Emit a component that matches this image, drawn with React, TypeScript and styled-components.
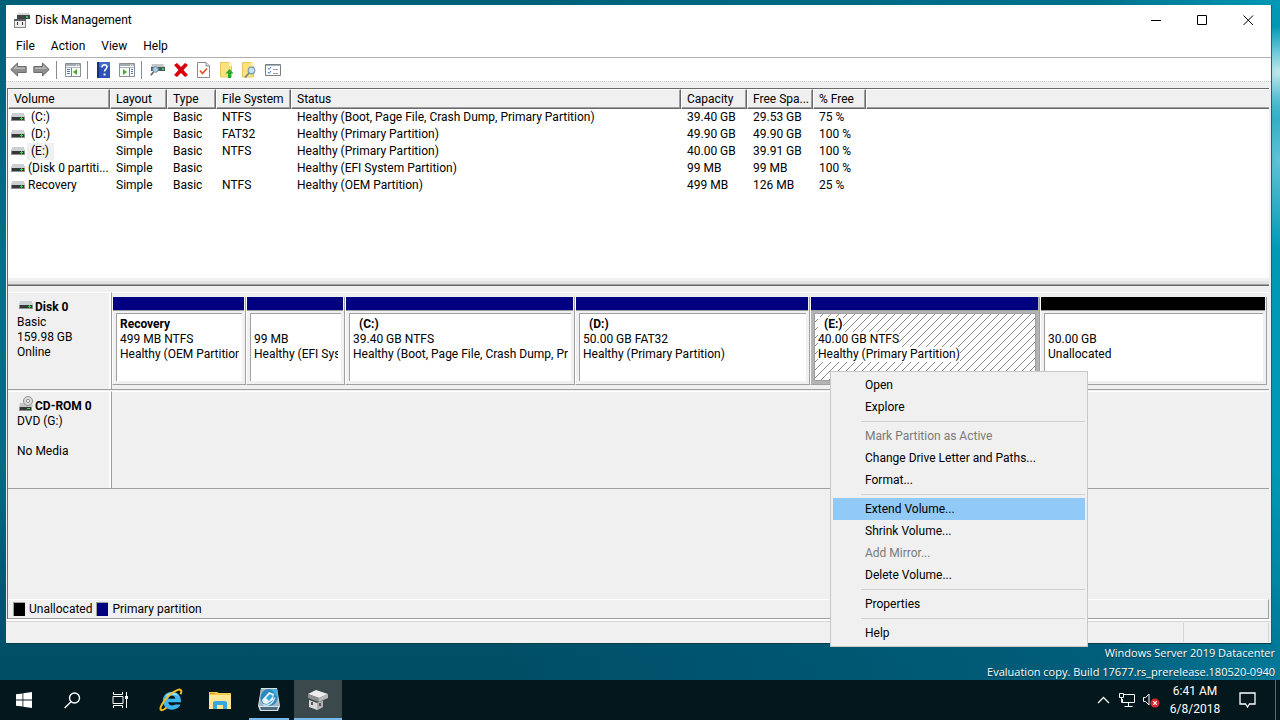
import React from "react";
import styled, { createGlobalStyle, css } from "styled-components";

const face = "#f0f0f0";
const shade = "#a0a0a0";
const dark = "#696969";

const GlobalStyle = createGlobalStyle`
  * { box-sizing: border-box; }
  body {
    margin: 0;
    font: 12px/18px "Segoe UI", Roboto, "Liberation Sans", sans-serif;
    color: #000;
  }
  button { font: inherit; color: inherit; border: 0; padding: 0; background: none; }
  svg { display: block; flex: none; }
`;

const Desktop = styled.div`
  position: relative;
  display: flex;
  flex-direction: column;
  min-height: 100vh;
  background:
    radial-gradient(ellipse 60px 46px at 100% 72px, #c4e8ec 0, rgba(120, 205, 220, 0.8) 50%, transparent 100%),
    radial-gradient(ellipse 60px 90px at 100% 160px, rgba(120, 205, 220, 0.8) 0, transparent 100%),
    linear-gradient(to bottom, transparent 65%, rgba(0, 64, 96, 0.35) 90%),
    linear-gradient(to left, rgba(0, 156, 184, 0.95) 0, rgba(0, 120, 150, 0.7) 14%, transparent 60%),
    linear-gradient(to bottom, #006078 0, #007088 38%, #006a80 70%, #00566a 92%);
`;

const AppWindow = styled.main`
  flex: 1;
  display: flex;
  flex-direction: column;
  margin: 5px 8px 0 6px;
  background: ${face};
  border-right: 1px solid #1b5f70;
  border-bottom: 1px solid #0c3a46;
`;

const TitleBar = styled.header`
  display: flex;
  align-items: center;
  height: 30px;
  padding-left: 8px;
  background: #fff;
`;

const Title = styled.h1`
  flex: 1;
  margin: 0 0 0 5px;
  font-size: 12px;
  font-weight: 400;
`;

const CaptionButton = styled.button`
  display: flex;
  align-items: center;
  justify-content: center;
  width: 46px;
  height: 30px;
`;

const MenuBar = styled.nav`
  display: flex;
  height: 22px;
  padding-left: 2px;
  background: #fff;
`;

const MenuBarButton = styled.button`
  padding: 0 8px;
`;

const ToolBar = styled.div`
  display: flex;
  align-items: center;
  height: 25px;
  margin-bottom: 6px;
  padding-left: 1px;
  background: #fff;
  border-top: 1px solid #b0b0b0;
  border-bottom: 1px dotted #c4c4c4;
`;

const ToolButton = styled.button`
  display: flex;
  align-items: center;
  justify-content: center;
  width: 23px;
  height: 22px;
`;

const ToolDivider = styled.span`
  width: 1px;
  height: 18px;
  margin: 0 4px 0 3px;
  background: #8c8c8c;
`;

const VolumePane = styled.section`
  height: 198px;
  margin: 0 2px 0 1px;
  display: flex;
  flex-direction: column;
  border-left: 1px solid ${dark};
  border-top: 1px solid ${dark};
  border-bottom: 1px solid ${dark};
  background: #fff;
`;

const VolumeArea = styled.div`
  flex: 1;
  overflow: hidden;
`;

const Splitter = styled.div`
  height: 7px;
  background: ${face};
  border-bottom: 1px solid ${shade};
  box-shadow: inset 0 -3px 0 #e3e3e3;
`;

const VolumeTable = styled.table`
  width: 100%;
  table-layout: fixed;
  border-collapse: separate;
  border-spacing: 0;
`;

const HeadCell = styled.th`
  height: 20px;
  padding: 0 0 0 5px;
  font-weight: 400;
  text-align: left;
  white-space: nowrap;
  background: ${face};
  border-left: 1px solid #fff;
  border-top: 1px solid #fff;
  border-right: 1px solid ${dark};
  border-bottom: 1px solid ${dark};
  box-shadow: inset -1px -1px 0 ${shade};
  &:last-child { border-right: 0; box-shadow: inset 0 -1px 0 ${shade}; }
`;

const Cell = styled.td`
  height: 17px;
  padding: 0 0 0 6px;
  line-height: 17px;
  white-space: nowrap;
`;

const VolumeName = styled.span<{ $letter: boolean; $selected?: boolean }>`
  display: flex;
  align-items: center;
  gap: 2px;
  margin-left: -3px;
  svg { margin-bottom: 2px; }
  span {
    padding: 0 ${p => (p.$letter ? "5px" : "0")} 0 ${p => (p.$letter ? "4px" : "1px")};
    background: ${p => (p.$selected ? face : "transparent")};
  }
`;

const DiskPane = styled.section`
  flex: 1;
  display: flex;
  flex-direction: column;
  margin: 0 2px 0 1px;
  padding-top: 6px;
  border-left: 1px solid ${dark};
`;

const DiskRow = styled.div`
  display: flex;
  height: 98px;
  margin-bottom: 1px;
`;

const DiskLabel = styled.div`
  width: 104px;
  padding: 7px 0 0 9px;
  line-height: 15px;
  border-top: 1px solid #fff;
  border-right: 1px solid ${shade};
  border-bottom: 1px solid ${shade};
  box-shadow: inset -2px 0 0 #fff;
`;

const DiskName = styled.h2`
  display: flex;
  align-items: center;
  height: 15px;
  gap: 2px;
  margin: 0;
  padding-left: 2px;
  font-size: 12px;
  font-weight: 700;
  svg { margin-bottom: 6px; }
`;

const Line = styled.div`
  height: 15px;
  white-space: nowrap;
`;

const Track = styled.div`
  flex: 1;
  display: flex;
  min-width: 0;
  padding: 4px 2px 4px 0;
  border-top: 1px solid #fff;
  border-bottom: 1px solid ${shade};
`;

const Partition = styled.button<{ $share: number; $selected?: boolean }>`
  flex: ${p => p.$share} 1 0;
  min-width: 0;
  display: flex;
  flex-direction: column;
  text-align: left;
  border-left: 1px solid #fff;
  border-right: 1px solid ${shade};
  border-bottom: 1px solid ${shade};
  background: ${p => (p.$selected ? "#b4b4b4" : face)};
`;

const Stripe = styled.span<{ $color: string }>`
  align-self: stretch;
  height: 14px;
  margin-right: 1px;
  background: ${p => p.$color};
  border-bottom: 1px solid ${shade};
`;

const PartitionBody = styled.span<{ $hatched?: boolean }>`
  flex: 1;
  align-self: stretch;
  margin: 2px 3px 3px;
  padding: 3px 3px 0 3px;
  line-height: 15px;
  border-left: 1px solid ${shade};
  border-top: 1px solid ${shade};
  background: #fff;
  ${p => p.$hatched && css`
    border: 1px solid ${shade};
    background: linear-gradient(135deg, #fff 46%, #8c8c8c 46%, #8c8c8c 54%, #fff 54%) 0 0 / 8px 8px;
  `}
`;

const PartitionText = styled.span<{ $bold?: boolean; $indent?: boolean; $opaque?: boolean }>`
  display: block;
  width: ${p => (p.$opaque ? "fit-content" : "auto")};
  height: 15px;
  padding-left: ${p => (p.$indent ? "6px" : "0")};
  overflow: hidden;
  white-space: nowrap;
  font-weight: ${p => (p.$bold ? 700 : 400)};
  background: ${p => (p.$opaque ? "#fff" : "transparent")};
`;

const Legend = styled.div`
  display: flex;
  align-items: center;
  height: 20px;
  margin-top: auto;
  padding-left: 5px;
  border-top: 1px solid #fff;
  border-right: 1px solid ${shade};
  border-bottom: 1px solid ${shade};
`;

const LegendItem = styled.span<{ $color: string }>`
  display: flex;
  align-items: center;
  margin-right: 4px;
  &::before {
    content: "";
    width: 11px;
    height: 13px;
    margin-right: 4px;
    background: ${p => p.$color};
    border-left: 1px solid ${shade};
    border-top: 1px solid ${shade};
  }
`;

const StatusBar = styled.footer`
  display: flex;
  justify-content: flex-end;
  height: 24px;
  padding: 2px 2px 1px 0;
  border-top: 2px solid #fff;
  box-shadow: inset 0 1px 0 #d4d4d4;
`;

const StatusCell = styled.span`
  width: 86px;
  border-left: 1px solid #d4d4d4;
  border-right: 1px solid #d4d4d4;
`;

const Watermark = styled.div`
  padding: 0 5px 0 0;
  font: 11px/17px "Open Sans", sans-serif;
  text-align: right;
  color: #fff;
  text-shadow: 0 1px 1px rgba(0, 0, 0, 0.5);
  p { margin: 0 0 2px; }
  p:last-child { margin: 0; }
`;

const ContextMenu = styled.div`
  position: absolute;
  left: 830px;
  top: 371px;
  width: 258px;
  padding: 2px;
  background: ${face};
  border: 1px solid #c8c8c8;
`;

const ContextItem = styled.button<{ $active?: boolean }>`
  display: block;
  width: 100%;
  height: 22px;
  padding-left: 32px;
  text-align: left;
  background: ${p => (p.$active ? "#91c9f7" : "transparent")};
  &:disabled { color: #7a7a7a; }
`;

const ContextDivider = styled.hr`
  height: 1px;
  margin: 3px 0 3px 28px;
  border: 0;
  background: #d0d0d0;
`;

const TaskBar = styled.footer`
  display: flex;
  height: 40px;
  color: #fff;
  background: #03171c;
`;

const TaskButton = styled.button<{ $state?: "running" | "active" }>`
  display: flex;
  align-items: center;
  justify-content: center;
  width: 48px;
  height: 40px;
  margin-right: 1px;
  background: ${p => (p.$state === "active" ? "#3b494d" : "transparent")};
  border-bottom: ${p => (p.$state ? "2px solid #76b9ed" : "0")};
  padding-top: ${p => (p.$state ? "2px" : "0")};
  &:nth-child(-n + 2) { margin-right: 0; }
  &:nth-child(3) { margin-right: 3px; }
  &:nth-child(6) { width: 40px; margin: 0 5px 0 4px; }
`;

const Tray = styled.div`
  display: flex;
  align-items: center;
  margin-left: auto;
`;

const TrayButton = styled.button`
  display: flex;
  align-items: center;
  justify-content: center;
  width: 24px;
  height: 40px;
`;

const NotificationButton = styled(TrayButton)`
  width: 40px;
  margin-right: 8px;
`;

const Clock = styled.button`
  width: 64px;
  height: 40px;
  line-height: 18px;
  text-align: center;
  span { display: block; }
`;

const ShowDesktop = styled.button`
  width: 5px;
  height: 40px;
  border-left: 1px solid #5c686c;
`;

const DriveIcon = () => (
  <svg width="14" height="8" viewBox="0 0 14 8" shapeRendering="crispEdges">
    <path d="M1 0h12l1 4H0z" fill="#cdd0d2" />
    <path d="M0 4h14v4H0z" fill="#8f8f8f" />
    <path d="M1 4h12v3H1z" fill="#353838" />
    <path d="M9 5h3v1H9z" fill="#3ddc4c" />
    <path d="M10 4h1v3h-1z" fill="#2fd040" />
  </svg>
);

const CdIcon = () => (
  <svg width="14" height="15" viewBox="0 0 14 15">
    <path d="M1 7h12l1 4H0z" fill="#c8c8c8" />
    <circle cx="9" cy="5" r="4.500" fill="#dcdcdc" stroke="#8d8d8d" />
    <circle cx="9" cy="5" r="1.600" fill="#fff" stroke="#8d8d8d" />
    <path d="M0 11h13v4H0z" fill="#8f8f8f" />
    <path d="M1 11h11v3H1z" fill="#353838" />
    <path d="M8 12h3v1H8z" fill="#3ddc4c" />
  </svg>
);

const AppIcon = () => (
  <svg width="16" height="15" viewBox="0 0 16 15">
    <path d="M4 0h11l1 3H3z" fill="#d5d5d5" />
    <path d="M3 2h13v4H3z" fill="#3f4444" />
    <path d="M12 3h2v2h-2z" fill="#34c759" />
    <path d="M0 6h12v9H0z" fill="#8b8b8b" />
    <path d="M0 6h12v2H0z" fill="#5c6060" />
    <path d="M1 8h10v6H1z" fill="#ececec" />
    <path d="M3 9h1v3H3zM8 9h1v3H8z" fill="#333" />
  </svg>
);

const ArrowIcon = ({ flip }: { flip?: boolean }) => (
  <svg width="17" height="15" viewBox="0 0 17 15">
    <g transform={flip ? "translate(17 0) scale(-1 1)" : undefined}>
      <path d="M.8 7.500 7.500 1v3.500h8.700v6H7.500V14z" fill="#8e8e8e" stroke="#6c6c6c" />
      <path d="M3 7 7 3v2.500h8V7z" fill="#b7b7b7" />
    </g>
  </svg>
);

const PaneIcon = ({ right }: { right?: boolean }) => (
  <svg width="16" height="14" viewBox="0 0 16 14">
    <path d="M.5.500h15v13H.5z" fill="#fff" stroke="#8a9098" />
    <path d="M1 1h14v2H1z" fill="#a3abb5" />
    <path d="M11 1.500h1v1h-1zM13 1.500h1v1h-1z" fill="#fff" />
    <path d="M1 4h14v1H1z" fill="#a9b3bd" />
    <path d={right ? "M10.500 5v8" : "M6.500 5v8"} stroke="#7a8088" />
    {right ? (
      <>
        <path d="m4 6 4 3-4 3z" fill="#3fae2a" />
        <path d="M12 6.500h2M12 8.500h2M12 10.500h2" stroke="#4a7db5" />
      </>
    ) : (
      <>
        <path d="m12 6-4 3 4 3z" fill="#3fae2a" />
        <path d="M2 6.500h3M2 8.500h3M2 10.500h3" stroke="#4a7db5" />
      </>
    )}
  </svg>
);

const HelpIcon = () => (
  <svg width="13" height="16" viewBox="0 0 13 16">
    <path d="M0 0h13v16H0z" fill="#2c50b4" />
    <path d="M0 0h2v16H0z" fill="#16307c" />
    <path d="M2 0h11v5H2z" fill="#5079d4" opacity=".6" />
    <path d="M5 5.500C5 1.800 10 2 10 5c0 2-2.500 2.200-2.500 4.500" fill="none" stroke="#fff" strokeWidth="1.600" />
    <path d="M6.500 11.500h2v2h-2z" fill="#fff" />
  </svg>
);

const RescanIcon = () => (
  <svg width="15" height="12" viewBox="0 0 15 12">
    <path d="M2 0h11l2 3H1z" fill="#c6c6c6" />
    <path d="M1 3h14v4H1z" fill="#4a5a60" />
    <path d="M12 4h2v2h-2z" fill="#35d04a" />
    <circle cx="5.500" cy="5.500" r="2.800" fill="#a8d0e6" stroke="#6f8c9c" />
    <path d="M3.500 8 .8 11.200" stroke="#5d5d5d" strokeWidth="1.600" />
  </svg>
);

const DeleteIcon = () => (
  <svg width="14" height="14" viewBox="0 0 14 14">
    <path d="M3 0l4 4 4-4 3 2-4.500 5L14 12l-3 2-4-4-4 4-3-2 4.500-5L0 2z" fill="#d8000c" />
  </svg>
);

const CheckPageIcon = () => (
  <svg width="13" height="16" viewBox="0 0 13 16">
    <path d="M.5.500h8.500l3.500 3.500v11.500H.5z" fill="#fff" stroke="#8a8a8a" />
    <path d="M9 .5V4h3.500" fill="#e6e6e6" stroke="#8a8a8a" />
    <path d="m3 8.500 2.500 3 4.500-5" fill="none" stroke="#e0552b" strokeWidth="1.800" />
  </svg>
);

const YellowPage = () => (
  <>
    <path d="M.5.500h11v14.500H.5z" fill="#fbe27c" stroke="#e6c65c" />
    <path d="M9 0h3v4H9z" fill="#fff3c0" />
  </>
);

const ExportIcon = () => (
  <svg width="14" height="16" viewBox="0 0 14 16">
    <YellowPage />
    <path d="m9.500 7 4 4.500H11V16H8v-4.500H5.500z" fill="#27a82b" />
  </svg>
);

const FindIcon = () => (
  <svg width="15" height="16" viewBox="0 0 15 16">
    <YellowPage />
    <circle cx="9.500" cy="8.500" r="3.300" fill="#c5e2f2" stroke="#7f98a8" strokeWidth="1.200" />
    <path d="m7 11-4 4.500" stroke="#7c8790" strokeWidth="1.800" />
  </svg>
);

const OptionsIcon = () => (
  <svg width="16" height="12" viewBox="0 0 16 12">
    <path d="M.5.500h15v11H.5z" fill="#fff" stroke="#7a8088" />
    <path d="M1 1h14v1H1z" fill="#aab2ba" />
    <path d="m3 4 1 1.500L6 3M3 8l1 1.500L6 7" fill="none" stroke="#3a7fc9" />
    <path d="M8 5.500h5M8 9.500h5" stroke="#9aa0a6" />
  </svg>
);

const InternetIcon = () => (
  <svg width="24" height="24" viewBox="0 0 24 24">
    <path
      d="M21.500 16.500c-1.400 3.300-4.600 5.200-8.500 5.200-5.300 0-9.200-3.700-9.200-8.900 0-5.100 3.900-9 9.300-9 5.800 0 9.200 4.200 8.900 10.400H9.200c.2 2 1.800 3.200 3.900 3.200 1.400 0 2.400-.3 3-0.900zM9.300 10.800h7c-.2-1.900-1.500-3-3.400-3s-3.300 1.100-3.600 3z"
      fill="#3fb4ee"
    />
    <path d="M6 9c1.500-3 4-4.200 7-4.200 3.500 0 6 1.700 7 4.700-1-2-3-3-7-2.700-3 0-5 1-7 2.200z" fill="#a6e2fb" />
    <path d="M7.500 19.500c-5.500 5-7.500 2.500-4.700-2.700C6 10 13.500 3.700 18.800 1.900c3.900-1.200 4.200 1.600 2.700 4.400" fill="none" stroke="#f5bd2a" strokeWidth="2" />
  </svg>
);

const ExplorerIcon = () => (
  <svg width="22" height="18" viewBox="0 0 22 18">
    <path d="M0 1h8l2 1h12v16H0z" fill="#f4c84d" />
    <path d="M0 4h22v14H0z" fill="#ffe594" />
    <path d="M1 2h5v1H1z" fill="#e09a28" />
    <path d="M4 18v-7l2-1h10l2 1v7h-4v-4H8v4z" fill="#3aa6e0" />
  </svg>
);

const PartitionToolIcon = () => (
  <svg width="24" height="24" viewBox="0 0 24 24">
    <path d="M4 0h16l3 18-2 5H3l-2-5z" fill="#d9e2e8" />
    <path d="M4 1h16l2 17H2z" fill="#9fb6c6" />
    <circle cx="12" cy="9.500" r="8.500" fill="#2d86ba" />
    <path d="M13 1h7l1 8c-3 0-3-5-8-8z" fill="#3fb0dc" />
    <path d="M5 12 12 4l5 2-1 6-6 4c-3 0-4-1-5-4z" fill="#e9f5fb" />
    <path d="m9 10 4-4 3 2-4 5z" fill="#31a5dc" />
    <path d="M6 16.500c5 2 10-1 12-7" fill="none" stroke="#bfe4f5" strokeWidth="1.500" />
    <path d="M3 19h18l-1 3H4z" fill="#4d6c80" />
  </svg>
);

const DiskToolIcon = () => (
  <svg width="22" height="20" viewBox="0 0 22 20">
    <path d="M1 4 9 0l12 4-9 4z" fill="#ededed" />
    <path d="m1 4 11 4v4L1 8z" fill="#8e8e8e" />
    <path d="m12 8 9-4v4l-9 4z" fill="#b9b9b9" />
    <path d="m2 10 8 3 6-2v6l-6 3-8-3z" fill="#d8d8d8" />
    <path d="m10 13 6-2v6l-6 3z" fill="#b0b0b0" />
    <path d="M4 12h2v3H4zM12 13h2v3h-2z" fill="#555" />
  </svg>
);

const toolGroups: { label: string; icon: React.ReactNode }[][] = [
  [
    { label: "Back", icon: <ArrowIcon /> },
    { label: "Forward", icon: <ArrowIcon flip /> },
  ],
  [{ label: "Show/Hide Console Tree", icon: <PaneIcon /> }],
  [
    { label: "Help", icon: <HelpIcon /> },
    { label: "Show/Hide Action Pane", icon: <PaneIcon right /> },
  ],
  [
    { label: "Rescan", icon: <RescanIcon /> },
    { label: "Delete", icon: <DeleteIcon /> },
    { label: "Properties", icon: <CheckPageIcon /> },
    { label: "Export", icon: <ExportIcon /> },
    { label: "Find", icon: <FindIcon /> },
    { label: "Options", icon: <OptionsIcon /> },
  ],
];

const columns: { title: string; width?: number }[] = [
  { title: "Volume", width: 102 },
  { title: "Layout", width: 57 },
  { title: "Type", width: 49 },
  { title: "File System", width: 75 },
  { title: "Status", width: 390 },
  { title: "Capacity", width: 66 },
  { title: "Free Spa...", width: 66 },
  { title: "% Free", width: 53 },
  { title: "" },
];

const volumes = [
  ["(C:)", "Simple", "Basic", "NTFS", "Healthy (Boot, Page File, Crash Dump, Primary Partition)", "39.40 GB", "29.53 GB", "75 %"],
  ["(D:)", "Simple", "Basic", "FAT32", "Healthy (Primary Partition)", "49.90 GB", "49.90 GB", "100 %"],
  ["(E:)", "Simple", "Basic", "NTFS", "Healthy (Primary Partition)", "40.00 GB", "39.91 GB", "100 %"],
  ["(Disk 0 partiti...", "Simple", "Basic", "", "Healthy (EFI System Partition)", "99 MB", "99 MB", "100 %"],
  ["Recovery", "Simple", "Basic", "NTFS", "Healthy (OEM Partition)", "499 MB", "126 MB", "25 %"],
];

const partitions = [
  { name: "Recovery", size: "499 MB NTFS", status: "Healthy (OEM Partition)", share: 132 },
  { name: "", size: "99 MB", status: "Healthy (EFI System Partition)", share: 97 },
  { name: "(C:)", size: "39.40 GB NTFS", status: "Healthy (Boot, Page File, Crash Dump, Primary Partition)", share: 228 },
  { name: "(D:)", size: "50.00 GB FAT32", status: "Healthy (Primary Partition)", share: 233 },
  { name: "(E:)", size: "40.00 GB NTFS", status: "Healthy (Primary Partition)", share: 228, selected: true },
  { name: "", size: "30.00 GB", status: "Unallocated", share: 225, free: true },
];

const menuItems: ({ label: string; disabled?: boolean; active?: boolean } | null)[] = [
  { label: "Open" },
  { label: "Explore" },
  null,
  { label: "Mark Partition as Active", disabled: true },
  { label: "Change Drive Letter and Paths..." },
  { label: "Format..." },
  null,
  { label: "Extend Volume...", active: true },
  { label: "Shrink Volume..." },
  { label: "Add Mirror...", disabled: true },
  { label: "Delete Volume..." },
  null,
  { label: "Properties" },
  null,
  { label: "Help" },
];

export default function App() {
  return (
    <>
      <GlobalStyle />
      <Desktop>
        <AppWindow>
          <TitleBar>
            <AppIcon />
            <Title>Disk Management</Title>
            <CaptionButton aria-label="Minimize">
              <svg width="11" height="11" viewBox="0 0 11 11"><path d="M0 5.500h10" stroke="#000" /></svg>
            </CaptionButton>
            <CaptionButton aria-label="Maximize">
              <svg width="11" height="11" viewBox="0 0 11 11"><path d="M.5.500h9v9h-9z" fill="none" stroke="#000" /></svg>
            </CaptionButton>
            <CaptionButton aria-label="Close">
              <svg width="11" height="11" viewBox="0 0 11 11"><path d="m.5.500 9.500 9.500M10 .5.500 10" stroke="#000" /></svg>
            </CaptionButton>
          </TitleBar>
          <MenuBar>
            {["File", "Action", "View", "Help"].map(m => <MenuBarButton key={m}>{m}</MenuBarButton>)}
          </MenuBar>
          <ToolBar>
            {toolGroups.map((group, i) => (
              <React.Fragment key={i}>
                {i > 0 && <ToolDivider />}
                {group.map(t => <ToolButton key={t.label} aria-label={t.label}>{t.icon}</ToolButton>)}
              </React.Fragment>
            ))}
          </ToolBar>

          <VolumePane>
            <VolumeArea>
              <VolumeTable>
                <colgroup>
                  {columns.map((c, i) => <col key={i} width={c.width} />)}
                </colgroup>
                <thead>
                  <tr>{columns.map((c, i) => <HeadCell key={i}>{c.title}</HeadCell>)}</tr>
                </thead>
                <tbody>
                  {volumes.map(row => (
                    <tr key={row[0]}>
                      {row.map((value, i) => (
                        <Cell key={i}>
                          {i === 0 ? (
                            <VolumeName $letter={value.endsWith(":)")} $selected={value === "(E:)"}>
                              <DriveIcon />
                              <span>{value}</span>
                            </VolumeName>
                          ) : value}
                        </Cell>
                      ))}
                    </tr>
                  ))}
                </tbody>
              </VolumeTable>
            </VolumeArea>
            <Splitter />
          </VolumePane>

          <DiskPane>
            <DiskRow>
              <DiskLabel>
                <DiskName><DriveIcon />Disk 0</DiskName>
                <Line>Basic</Line>
                <Line>159.98 GB</Line>
                <Line>Online</Line>
              </DiskLabel>
              <Track>
                {partitions.map(p => (
                  <Partition key={p.size} $share={p.share} $selected={p.selected}>
                    <Stripe $color={p.free ? "#000" : "#000080"} />
                    <PartitionBody $hatched={p.selected}>
                      <PartitionText $bold $indent={p.name.startsWith("(")} $opaque={p.selected}>{p.name}</PartitionText>
                      <PartitionText $opaque={p.selected}>{p.size}</PartitionText>
                      <PartitionText $opaque={p.selected}>{p.status}</PartitionText>
                    </PartitionBody>
                  </Partition>
                ))}
              </Track>
            </DiskRow>
            <DiskRow>
              <DiskLabel>
                <DiskName><CdIcon />CD-ROM 0</DiskName>
                <Line>DVD (G:)</Line>
                <Line />
                <Line>No Media</Line>
              </DiskLabel>
              <Track />
            </DiskRow>
            <Legend>
              <LegendItem $color="#000">Unallocated</LegendItem>
              <LegendItem $color="#000080">Primary partition</LegendItem>
            </Legend>
          </DiskPane>
          <StatusBar><StatusCell /></StatusBar>
        </AppWindow>

        <Watermark>
          <p>Windows Server 2019 Datacenter</p>
          <p>Evaluation copy. Build 17677.rs_prerelease.180520-0940</p>
        </Watermark>

        <TaskBar>
          <TaskButton aria-label="Start">
            <svg width="16" height="16" viewBox="0 0 16 16"><path d="M0 2.300 6.500 1.400v6.200H0zM7.300 1.300 16 0v7.600H7.300zM0 8.400h6.500v6.200L0 13.700zM7.300 8.400H16V16l-8.700-1.300z" fill="#fff" /></svg>
          </TaskButton>
          <TaskButton aria-label="Search">
            <svg width="17" height="17" viewBox="0 0 17 17" fill="none" stroke="#fff" strokeWidth="1.400"><circle cx="10.500" cy="6" r="5" /><path d="M7 9.700.7 16" /></svg>
          </TaskButton>
          <TaskButton aria-label="Task View">
            <svg width="17" height="16" viewBox="0 0 17 16" fill="none" stroke="#fff"><path d="M1 4.500h10v7H1zM1.500 0v2.500h9V0M1.500 16v-2.500h9V16M14.500 0v16" /><path d="M13 4h3v3h-3z" fill="#fff" stroke="none" /></svg>
          </TaskButton>
          <TaskButton aria-label="Internet Explorer"><InternetIcon /></TaskButton>
          <TaskButton aria-label="File Explorer"><ExplorerIcon /></TaskButton>
          <TaskButton aria-label="Partition tool" $state="running"><PartitionToolIcon /></TaskButton>
          <TaskButton aria-label="Disk Management" $state="active"><DiskToolIcon /></TaskButton>
          <Tray>
            <TrayButton aria-label="Show hidden icons">
              <svg width="13" height="8" viewBox="0 0 13 8"><path d="m1 7 5.500-5.500L12 7" fill="none" stroke="#fff" strokeWidth="1.300" /></svg>
            </TrayButton>
            <TrayButton aria-label="Network">
              <svg width="16" height="14" viewBox="0 0 16 14" fill="none" stroke="#fff"><path d="M5 1.500h10.500v8H3.500V6M9.500 10v3M5.500 13.500h8" /><path d="M.5.500h4v4h-4zM2.500 4.500v5h1" /></svg>
            </TrayButton>
            <TrayButton aria-label="Volume">
              <svg width="17" height="15" viewBox="0 0 17 15"><path d="M.5 4.500h2l3.500-3.500v11L2.500 8.500h-2z" fill="none" stroke="#fff" /><circle cx="12" cy="10" r="4.500" fill="#d9282f" /><path d="m10.200 8.200 3.600 3.600M13.800 8.200l-3.600 3.600" stroke="#fff" strokeWidth="1.200" /></svg>
            </TrayButton>
            <Clock>
              <span>6:41 AM</span>
              <span>6/8/2018</span>
            </Clock>
            <NotificationButton aria-label="Notifications">
              <svg width="17" height="16" viewBox="0 0 17 16"><path d="M1 1h15v11h-5.500l-2 3-2-3H1z" fill="none" stroke="#fff" strokeWidth="1.300" /></svg>
            </NotificationButton>
            <ShowDesktop aria-label="Show desktop" />
          </Tray>
        </TaskBar>

        <ContextMenu role="menu">
          {menuItems.map((item, i) =>
            item ? (
              <ContextItem key={i} role="menuitem" disabled={item.disabled} $active={item.active}>{item.label}</ContextItem>
            ) : (
              <ContextDivider key={i} />
            )
          )}
        </ContextMenu>
      </Desktop>
    </>
  );
}
